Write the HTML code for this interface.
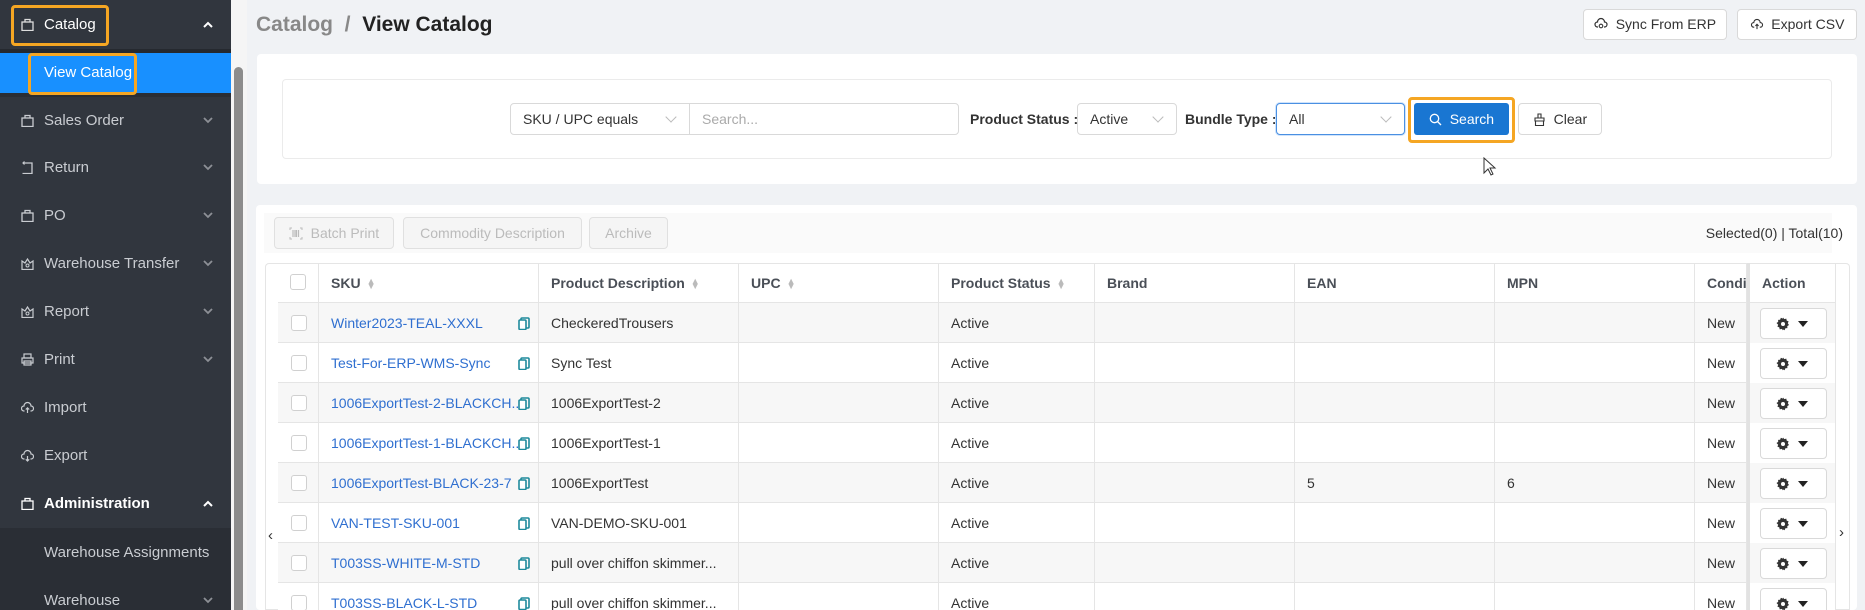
<!DOCTYPE html>
<html><head><meta charset="utf-8"><style>
*{box-sizing:border-box;margin:0;padding:0}
html,body{width:1865px;height:610px;overflow:hidden}
body{background:#f0f2f5;font-family:"Liberation Sans",sans-serif;font-size:14px;color:#333;position:relative}
.a{position:absolute}
#sb{left:0;top:0;width:231px;height:610px;background:#31363e}
.it{position:absolute;left:0;width:231px;height:48px;color:#c9ccd1;font-size:15px;line-height:48px}
.it .ic{position:absolute;left:21px;top:17px;width:13px;height:13px}
.it .tx{position:absolute;left:44px}
.it .ch{position:absolute;left:203px;top:20px;width:10px;height:7px}
.btn{position:absolute;background:#fff;border:1px solid #d9d9d9;border-radius:4px;font-size:14px;color:#333;text-align:center}
.sel{position:absolute;background:#fff;border:1px solid #d9d9d9;border-radius:4px;height:32px;line-height:30px;padding-left:12px;font-size:14px;color:#333}
.sel:after{content:"";position:absolute;right:14px;top:9px;width:7px;height:7px;border-right:1px solid #bbb;border-bottom:1px solid #bbb;transform:rotate(45deg)}
.lbl{position:absolute;font-weight:bold;font-size:14px;color:#333;top:111px}
.th{position:absolute;top:263px;height:40px;line-height:40px;font-weight:bold;color:#4a4f57;font-size:14px;padding-left:12px;border-right:1px solid #e5e5e5}
.row{position:absolute;left:278px;width:1554px;height:40px;border-bottom:1px solid #e5e5e5}
.c{position:absolute;top:0;height:40px;line-height:40px;padding-left:12px;border-right:1px solid #e5e5e5;white-space:nowrap;overflow:hidden}
.cb{position:absolute;left:13px;top:12px;width:16px;height:16px;border:1px solid #d0d0d0;border-radius:3px;background:#fff}
.lnk{color:#2f6fd0}
.srt{display:inline-block;margin-left:6px;color:#bbb;font-size:9px;line-height:5px;vertical-align:middle}
.ab{position:absolute;left:1760px;width:67px;height:31px;border:1px solid #d9d9d9;border-radius:4px;background:#fff}
</style></head><body>

<div id="sb" class="a">
  <div class="a" style="left:0;top:49px;width:231px;height:4px;background:#25292f"></div>
  <div class="a" style="left:0;top:53px;width:231px;height:40px;background:#1890ff"></div>
  <div class="a" style="left:0;top:93px;width:231px;height:4px;background:#2a2e35"></div>
  <div class="a" style="left:0;top:528px;width:231px;height:82px;background:#2a2e35"></div>

  <div class="it" style="top:1px;color:#fff"><svg class="ic" viewBox="0 0 13 13"><rect x="1" y="4" width="11" height="8.5" fill="none" stroke="#ddd" stroke-width="1.3"/><path d="M4 4V1.5h5V4" fill="none" stroke="#ddd" stroke-width="1.3"/></svg><span class="tx">Catalog</span><svg class="ch" viewBox="0 0 10 7"><path d="M1 6l4-4 4 4" fill="none" stroke="#fff" stroke-width="2"/></svg></div>
  <div class="a" style="left:44px;top:53px;line-height:40px;color:#fff;font-size:15px">View Catalog</div>

  <div class="it" style="top:97px"><svg class="ic" viewBox="0 0 13 13"><rect x="1" y="4" width="11" height="8.5" fill="none" stroke="#c9ccd1" stroke-width="1.3"/><path d="M4 4V1.5h5V4" fill="none" stroke="#c9ccd1" stroke-width="1.3"/></svg><span class="tx">Sales Order</span><svg class="ch" viewBox="0 0 10 7"><path d="M1 1l4 4 4-4" fill="none" stroke="#8d9096" stroke-width="1.8"/></svg></div>
  <div class="it" style="top:144px"><svg class="ic" viewBox="0 0 13 13"><path d="M2 2h9v10.5H1.5" fill="none" stroke="#c9ccd1" stroke-width="1.3"/><path d="M3.5 0.5L2 2l1.5 1.5" fill="none" stroke="#c9ccd1" stroke-width="1.2"/></svg><span class="tx">Return</span><svg class="ch" viewBox="0 0 10 7"><path d="M1 1l4 4 4-4" fill="none" stroke="#8d9096" stroke-width="1.8"/></svg></div>
  <div class="it" style="top:192px"><svg class="ic" viewBox="0 0 13 13"><rect x="1" y="4" width="11" height="8.5" fill="none" stroke="#c9ccd1" stroke-width="1.3"/><path d="M4 4V1.5h5V4" fill="none" stroke="#c9ccd1" stroke-width="1.3"/></svg><span class="tx">PO</span><svg class="ch" viewBox="0 0 10 7"><path d="M1 1l4 4 4-4" fill="none" stroke="#8d9096" stroke-width="1.8"/></svg></div>
  <div class="it" style="top:240px"><svg class="ic" viewBox="0 0 13 13"><path d="M1 4l3 2 2.5-4 2.5 4 3-2v8.5H1z" fill="none" stroke="#c9ccd1" stroke-width="1.2"/><circle cx="6.5" cy="8.5" r="1.5" fill="none" stroke="#c9ccd1"/></svg><span class="tx">Warehouse Transfer</span><svg class="ch" viewBox="0 0 10 7"><path d="M1 1l4 4 4-4" fill="none" stroke="#8d9096" stroke-width="1.8"/></svg></div>
  <div class="it" style="top:288px"><svg class="ic" viewBox="0 0 13 13"><path d="M1 4l3 2 2.5-4 2.5 4 3-2v8.5H1z" fill="none" stroke="#c9ccd1" stroke-width="1.2"/><circle cx="6.5" cy="8.5" r="1.5" fill="none" stroke="#c9ccd1"/></svg><span class="tx">Report</span><svg class="ch" viewBox="0 0 10 7"><path d="M1 1l4 4 4-4" fill="none" stroke="#8d9096" stroke-width="1.8"/></svg></div>
  <div class="it" style="top:336px"><svg class="ic" viewBox="0 0 13 13"><rect x="3" y="1" width="7" height="4" fill="none" stroke="#c9ccd1" stroke-width="1.2"/><rect x="1" y="5" width="11" height="5" fill="none" stroke="#c9ccd1" stroke-width="1.2"/><rect x="3" y="8" width="7" height="4" fill="none" stroke="#c9ccd1" stroke-width="1.2"/></svg><span class="tx">Print</span><svg class="ch" viewBox="0 0 10 7"><path d="M1 1l4 4 4-4" fill="none" stroke="#8d9096" stroke-width="1.8"/></svg></div>
  <div class="it" style="top:384px"><svg class="ic" viewBox="0 0 13 13"><path d="M3.5 10H3a2.5 2.5 0 0 1 0-5 3.5 3.5 0 0 1 7 0 2.5 2.5 0 0 1 0 5h-.5" fill="none" stroke="#c9ccd1" stroke-width="1.2"/><path d="M6.5 12V7M4.8 8.5l1.7-1.7 1.7 1.7" fill="none" stroke="#c9ccd1" stroke-width="1.2"/></svg><span class="tx">Import</span></div>
  <div class="it" style="top:432px"><svg class="ic" viewBox="0 0 13 13"><path d="M3.5 10H3a2.5 2.5 0 0 1 0-5 3.5 3.5 0 0 1 7 0 2.5 2.5 0 0 1 0 5h-.5" fill="none" stroke="#c9ccd1" stroke-width="1.2"/><path d="M6.5 7v5M4.8 10.3l1.7 1.7 1.7-1.7" fill="none" stroke="#c9ccd1" stroke-width="1.2"/></svg><span class="tx">Export</span></div>
  <div class="it" style="top:480px;color:#fff;font-weight:bold"><svg class="ic" viewBox="0 0 13 13"><rect x="1" y="4" width="11" height="8.5" fill="none" stroke="#fff" stroke-width="1.3"/><path d="M4 4V1.5h5V4" fill="none" stroke="#fff" stroke-width="1.3"/></svg><span class="tx">Administration</span><svg class="ch" viewBox="0 0 10 7"><path d="M1 6l4-4 4 4" fill="none" stroke="#fff" stroke-width="2"/></svg></div>
  <div class="it" style="top:529px"><span class="tx">Warehouse Assignments</span></div>
  <div class="it" style="top:577px"><span class="tx">Warehouse</span><svg class="ch" viewBox="0 0 10 7"><path d="M1 1l4 4 4-4" fill="none" stroke="#8d9096" stroke-width="1.8"/></svg></div>

  <div class="a" style="left:11px;top:5px;width:98px;height:41px;border:3px solid #f5a623;border-radius:4px"></div>
  <div class="a" style="left:28px;top:53px;width:109px;height:42px;border:3px solid #f5a623;border-radius:4px"></div>
</div>
<div class="a" style="left:231px;top:0;width:16px;height:610px;background:#f5f5f5"></div>
<div class="a" style="left:234px;top:67px;width:9px;height:543px;background:#8c8c8c;border-radius:5px 5px 0 0"></div>

<div class="a" style="left:256px;top:13px;font-size:21px;font-weight:bold;color:#888">Catalog&nbsp;&nbsp;/&nbsp;&nbsp;<span style="color:#222">View Catalog</span></div>
<div class="btn" style="left:1583px;top:9px;width:144px;height:31px;line-height:29px"><svg width="14" height="13" viewBox="0 0 13 13" style="vertical-align:-1px"><path d="M3.5 10H3a2.5 2.5 0 0 1 0-5 3.5 3.5 0 0 1 7 0 2.5 2.5 0 0 1 0 5h-.5" fill="none" stroke="#333" stroke-width="1.2"/><circle cx="6.5" cy="9" r="1.8" fill="none" stroke="#333" stroke-width="1.1"/></svg>&nbsp; Sync From ERP</div>
<div class="btn" style="left:1737px;top:9px;width:120px;height:31px;line-height:29px"><svg width="14" height="12" viewBox="0 0 13 13" style="vertical-align:-1px"><path d="M3.5 10H3a2.5 2.5 0 0 1 0-5 3.5 3.5 0 0 1 7 0 2.5 2.5 0 0 1 0 5h-.5" fill="none" stroke="#333" stroke-width="1.2"/><path d="M6.5 12V7M4.8 8.5l1.7-1.7 1.7 1.7" fill="none" stroke="#333" stroke-width="1.2"/></svg>&nbsp; Export CSV</div>

<div class="a" style="left:257px;top:54px;width:1600px;height:130px;background:#fff;border-radius:4px"></div>
<div class="a" style="left:282px;top:79px;width:1550px;height:80px;border:1px solid #ebebeb;border-radius:4px"></div>
<div class="sel" style="left:510px;top:103px;width:180px;border-radius:4px 0 0 4px">SKU / UPC equals</div>
<div class="a" style="left:689px;top:103px;width:270px;height:32px;border:1px solid #d9d9d9;border-radius:0 4px 4px 0;background:#fff;line-height:30px;padding-left:12px;color:#aaa">Search...</div>
<div class="lbl" style="left:970px">Product Status :</div>
<div class="sel" style="left:1077px;top:103px;width:100px">Active</div>
<div class="lbl" style="left:1185px">Bundle Type :</div>
<div class="sel" style="left:1276px;top:103px;width:129px;border-color:#4a90e2;box-shadow:0 0 0 1px #cfe3fb">All</div>
<div class="a" style="left:1408px;top:97px;width:107px;height:46px;border:3px solid #f5a623;border-radius:4px"></div>
<div class="a" style="left:1414px;top:103px;width:95px;height:32px;background:#1976d2;border-radius:3px;color:#fff;line-height:32px;text-align:center"><svg width="13" height="13" viewBox="0 0 13 13" style="vertical-align:-2px"><circle cx="5.5" cy="5.5" r="4.2" fill="none" stroke="#fff" stroke-width="1.3"/><path d="M8.5 8.5l3.5 3.5" stroke="#fff" stroke-width="1.3"/></svg>&nbsp; Search</div>
<div class="btn" style="left:1518px;top:103px;width:84px;height:32px;line-height:30px"><svg width="13" height="13" viewBox="0 0 13 13" style="vertical-align:-2px"><path d="M5 1h3v4H5zM2 5h9v3H2zM2.5 8h8v4.5h-8z" fill="none" stroke="#333" stroke-width="1.1"/></svg>&nbsp; Clear</div>
<svg class="a" style="left:1483px;top:157px" width="14" height="20" viewBox="0 0 14 20"><path d="M1 1v15l4-4 3 6 2-1-3-6h5z" fill="#fff" stroke="#333" stroke-width="1"/></svg>

<div class="a" style="left:256px;top:205px;width:1601px;height:405px;background:#fff;border-radius:4px"></div>
<div class="a" style="left:264px;top:213px;width:1568px;height:40px;background:#fafafa"></div>
<div class="btn" style="left:274px;top:217px;width:120px;height:32px;line-height:30px;color:#bbb;background:#f5f5f5;border-color:#e0e0e0"><svg width="14" height="13" viewBox="0 0 14 13" style="vertical-align:-2px"><path d="M1 3V1h2M11 1h2v2M13 10v2h-2M3 12H1v-2" fill="none" stroke="#bbb"/><path d="M4 3v7M6 3v7M7.5 3v7M9.5 3v7" stroke="#bbb" stroke-width="1.2"/></svg>&nbsp; Batch Print</div>
<div class="btn" style="left:403px;top:217px;width:179px;height:32px;line-height:30px;color:#bbb;background:#f5f5f5;border-color:#e0e0e0">Commodity Description</div>
<div class="btn" style="left:589px;top:217px;width:79px;height:32px;line-height:30px;color:#bbb;background:#f5f5f5;border-color:#e0e0e0">Archive</div>
<div class="a" style="right:22px;top:225px;font-size:14px;color:#333">Selected(0) | Total(10)</div>

<div class="a" style="left:265px;top:263px;width:13px;height:347px;border:1px solid #e5e5e5;border-right:none;border-radius:4px 0 0 0"></div>
<div class="a" style="left:268px;top:527px;color:#333;font-size:15px">&lsaquo;</div>
<div class="a" style="left:1836px;top:263px;width:14px;height:347px;border:1px solid #e5e5e5;border-left:none;border-radius:0 4px 0 0"></div>
<div class="a" style="left:1839px;top:524px;color:#333;font-size:15px">&rsaquo;</div>

<div class="a" style="left:278px;top:263px;width:1558px;height:40px;border-top:1px solid #e5e5e5;border-bottom:1px solid #e5e5e5;background:#fff"></div>
<div class="th" style="left:278px;width:41px"><div class="cb" style="top:11px;left:12px"></div></div>
<div class="th" style="left:319px;width:220px">SKU<span class="srt">&#9650;<br>&#9660;</span></div>
<div class="th" style="left:539px;width:200px">Product Description<span class="srt">&#9650;<br>&#9660;</span></div>
<div class="th" style="left:739px;width:200px">UPC<span class="srt">&#9650;<br>&#9660;</span></div>
<div class="th" style="left:939px;width:156px">Product Status<span class="srt">&#9650;<br>&#9660;</span></div>
<div class="th" style="left:1095px;width:200px">Brand</div>
<div class="th" style="left:1295px;width:200px">EAN</div>
<div class="th" style="left:1495px;width:200px">MPN</div>
<div class="th" style="left:1695px;width:52px;overflow:hidden;white-space:nowrap">Condition</div>
<div class="th" style="left:1747px;width:89px;border-left:3px solid #e2e2e2">Action</div>

<div id="rows"></div>
<script>
var d=[["Winter2023-TEAL-XXXL","CheckeredTrousers","",""],["Test-For-ERP-WMS-Sync","Sync Test","",""],["1006ExportTest-2-BLACKCH...","1006ExportTest-2","",""],["1006ExportTest-1-BLACKCH...","1006ExportTest-1","",""],["1006ExportTest-BLACK-23-7","1006ExportTest","5","6"],["VAN-TEST-SKU-001","VAN-DEMO-SKU-001","",""],["T003SS-WHITE-M-STD","pull over chiffon skimmer...","",""],["T003SS-BLACK-L-STD","pull over chiffon skimmer...","",""]];
var h="";
d.forEach(function(r,i){var t=303+i*40,bg=i%2==0?"#f7f7f7":"#fff";
h+='<div class="row" style="top:'+t+'px;background:'+bg+'">'+
'<div class="c" style="left:0;width:41px"><div class="cb"></div></div>'+
'<div class="c" style="left:41px;width:220px"><span class="lnk">'+r[0]+'</span><svg style="position:absolute;left:199px;top:14px" width="12" height="13" viewBox="0 0 12 13"><rect x="3" y="1" width="8" height="10" rx="1" fill="none" stroke="#1f8a9c" stroke-width="1.6"/><rect x="1" y="3" width="7" height="9.5" rx="1" fill="#fff" stroke="#1f8a9c" stroke-width="1.6"/></svg></div>'+
'<div class="c" style="left:261px;width:200px">'+r[1]+'</div>'+
'<div class="c" style="left:461px;width:200px"></div>'+
'<div class="c" style="left:661px;width:156px">Active</div>'+
'<div class="c" style="left:817px;width:200px"></div>'+
'<div class="c" style="left:1017px;width:200px">'+r[2]+'</div>'+
'<div class="c" style="left:1217px;width:200px">'+r[3]+'</div>'+
'<div class="c" style="left:1417px;width:52px">New</div>'+
'<div class="c" style="left:1469px;width:89px;border-left:3px solid #e2e2e2;background:'+bg+'"></div>'+
'</div>'+
'<div class="ab" style="top:'+(t+5)+'px"><svg style="position:absolute;left:15px;top:8px" width="14" height="14" viewBox="0 0 14 14"><path d="M7 0.5l1.3 1.6 2-.5.4 2 1.9.8-.8 1.9 1.2 1.7-1.7 1.1.1 2-2 .2-.8 1.9-1.9-.8L7 13.5l-1.3-1.6-2 .5-.4-2-1.9-.8.8-1.9L.5 6l1.7-1.1-.1-2 2-.2.8-1.9 1.9.8z" fill="#333"/><circle cx="7" cy="7" r="2" fill="#fff"/></svg><svg style="position:absolute;left:37px;top:12px" width="10" height="6" viewBox="0 0 10 6"><path d="M0 0h10L5 6z" fill="#222"/></svg></div>';});
document.getElementById("rows").innerHTML=h;
</script>
</body></html>
